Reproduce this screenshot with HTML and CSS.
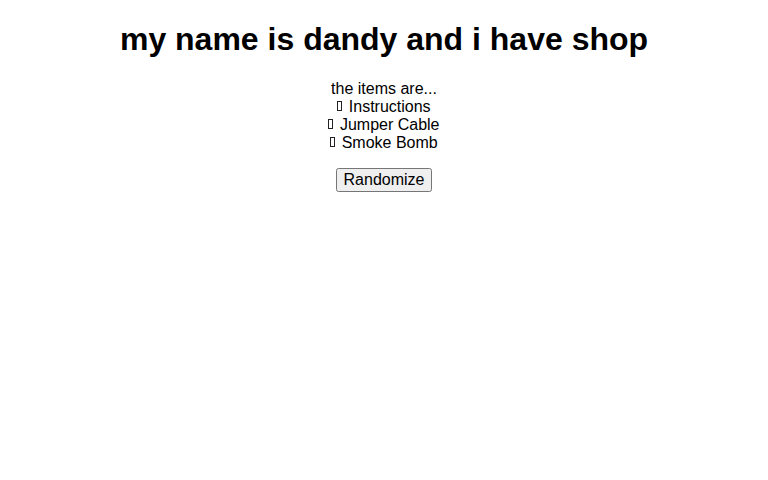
FILE: index.html
```html
<!DOCTYPE html>
<html lang="en">
<head>
  <meta charset="UTF-8" />
  <title>Dandy's Shop</title>
  <link rel="stylesheet" href="styles.css">
</head>
<body>
  <h1>my name is dandy and i have shop</h1>
  <p class="items" id="items">
    the items are...<br>
    <span class="icon"></span> Instructions<br>
    <span class="icon"></span> Jumper Cable<br>
    <span class="icon"></span> Smoke Bomb
  </p>
  <p class="actions">
    <button class="btn" id="randomize">Randomize</button>
  </p>
  <script>
  const shop = ['Instructions', 'Jumper Cable', 'Smoke Bomb', 'Battery', 'Toolbox', 'Bandage', 'Flashlight'];

  document.getElementById('randomize').onclick = function() {
    const picks = shop.slice().sort(() => Math.random() - 0.5).slice(0, 3);
    document.getElementById('items').innerHTML = 'the items are...<br>' +
      picks.map(p => `<span class="icon"></span> ${p}`).join('<br>');
  };
  </script>
</body>
</html>
```

FILE: styles.css
```css
body {
  margin: 0;
  font-family: 'Liberation Sans', Arial, sans-serif;
  text-align: center;
  color: #000;
  background: #fff;
}
h1 {
  font-size: 2em;
  font-weight: bold;
}
/* placeholder box in front of each item */
.icon {
  display: inline-block;
  width: 3px;
  height: 8px;
  border: 1px solid #222;
  margin: 0 2px 1px 0;
}
.btn {
  font-family: 'Liberation Sans', Arial, sans-serif;
  font-size: 16px;
}
```
